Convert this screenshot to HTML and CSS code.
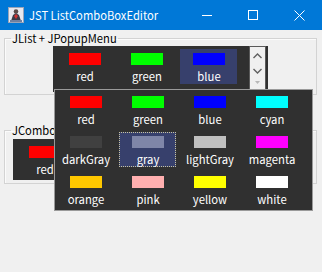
FILE: index.html
```html
<!DOCTYPE html>
<html>
<head>
<meta charset="utf-8">
<link rel="stylesheet" href="styles.css">
</head>
<body>
<div class="window">
  <div class="titlebar">
    <svg class="app-icon" viewBox="0 0 16 16" width="16" height="16">
      <rect x="0.5" y="0.5" width="15" height="15" fill="#e8e8ee" stroke="#9aa4b8"/>
      <path d="M3 14 L5 8 L8 6 L11 8 L13 14 Z" fill="#3a3a48"/>
      <circle cx="8" cy="4.5" r="2.3" fill="#5a4a48"/>
      <path d="M6 9 L8 7 L10 9 L8 12 Z" fill="#d03030"/>
      <rect x="2" y="13" width="12" height="2" fill="#7080a0"/>
    </svg>
    <div class="title">JST ListComboBoxEditor</div>
    <div class="ctrl">
      <svg width="10" height="10" viewBox="0 0 10 10"><path d="M0 5.5 H10" stroke="#fff" stroke-width="1"/></svg>
    </div>
    <div class="ctrl">
      <svg width="10" height="10" viewBox="0 0 10 10"><rect x="0.5" y="0.5" width="9" height="9" fill="none" stroke="#fff" stroke-width="1"/></svg>
    </div>
    <div class="ctrl">
      <svg width="11" height="11" viewBox="0 0 11 11"><path d="M0.5 0.5 L10.5 10.5 M10.5 0.5 L0.5 10.5" stroke="#fff" stroke-width="1"/></svg>
    </div>
  </div>

  <div class="content">
    <fieldset class="group group-list">
      <legend>JList + JPopupMenu</legend>
      <div class="listwrap">
        <div class="list">
          <div class="cell"><div class="item"><span class="swatch" style="background:#ff0000"></span><span class="label">red</span></div></div>
          <div class="cell"><div class="item"><span class="swatch" style="background:#00ff00"></span><span class="label">green</span></div></div>
          <div class="cell"><div class="item selected"><span class="swatch" style="background:#0000ff"></span><span class="label">blue</span></div></div>
        </div>
        <div class="scrollbar">
          <svg class="arrow" width="9" height="6" viewBox="0 0 9 6"><path d="M0.5 5 L4.5 1 L8.5 5" fill="none" stroke="#606060" stroke-width="1.4"/></svg>
          <svg class="arrow" width="9" height="6" viewBox="0 0 9 6"><path d="M0.5 1 L4.5 5 L8.5 1" fill="none" stroke="#606060" stroke-width="1.4"/></svg>
          <svg class="arrow small" width="5" height="3" viewBox="0 0 5 3"><path d="M0 0 L2.5 3 L5 0 Z" fill="#b8b8b8"/></svg>
        </div>
      </div>
    </fieldset>

    <fieldset class="group group-combo">
      <legend>JComboBox</legend>
      <div class="combo">
        <div class="cell"><div class="item"><span class="swatch" style="background:#ff0000"></span><span class="label">red</span></div></div>
      </div>
    </fieldset>
  </div>

  <div class="popup">
    <div class="cell"><div class="item"><span class="swatch" style="background:#ff0000"></span><span class="label">red</span></div></div>
    <div class="cell"><div class="item"><span class="swatch" style="background:#00ff00"></span><span class="label">green</span></div></div>
    <div class="cell"><div class="item"><span class="swatch" style="background:#0000ff"></span><span class="label">blue</span></div></div>
    <div class="cell"><div class="item"><span class="swatch" style="background:#00ffff"></span><span class="label">cyan</span></div></div>
    <div class="cell"><div class="item"><span class="swatch" style="background:#404040"></span><span class="label">darkGray</span></div></div>
    <div class="cell"><div class="item selected focus"><span class="swatch" style="background:#7f86a8"></span><span class="label">gray</span></div></div>
    <div class="cell"><div class="item"><span class="swatch" style="background:#c0c0c0"></span><span class="label">lightGray</span></div></div>
    <div class="cell"><div class="item"><span class="swatch" style="background:#ff00ff"></span><span class="label">magenta</span></div></div>
    <div class="cell"><div class="item"><span class="swatch" style="background:#ffc800"></span><span class="label">orange</span></div></div>
    <div class="cell"><div class="item"><span class="swatch" style="background:#ffafaf"></span><span class="label">pink</span></div></div>
    <div class="cell"><div class="item"><span class="swatch" style="background:#ffff00"></span><span class="label">yellow</span></div></div>
    <div class="cell"><div class="item"><span class="swatch" style="background:#ffffff"></span><span class="label">white</span></div></div>
  </div>
</div>
</body>
</html>
```

FILE: styles.css
```css
html, body {
  margin: 0;
  padding: 0;
}
body {
  width: 322px;
  height: 272px;
  overflow: hidden;
  background: #f0f0f0;
  font-family: "Noto Sans CJK JP", "Noto Sans", sans-serif;
  font-size: 11px;
}
.window {
  position: relative;
  width: 322px;
  height: 272px;
  background: #f0f0f0;
}
.titlebar {
  height: 30px;
  background: #0078d7;
  color: #fff;
  display: flex;
  align-items: center;
}
.app-icon {
  margin-left: 8px;
  margin-right: 5px;
  flex: none;
}
.title {
  flex: 1;
  font-size: 11.2px;
  line-height: 16px;
}
.ctrl {
  width: 46px;
  height: 30px;
  display: flex;
  align-items: center;
  justify-content: center;
}
.content {
  padding: 1px 5px 0 4px;
}
.group {
  margin: 0;
  border: 1px solid #d3d3d3;
  box-shadow: inset 1px 1px 0 #fbfbfb;
  min-width: 0;
  padding-left: 0;
  padding-right: 0;
}
.group legend {
  margin-left: 6px;
  padding: 0 1px;
  font-size: 11.2px;
  line-height: 14px;
  color: #000;
}
.group-list {
  padding-top: 1px;
  padding-bottom: 2px;
}
.group-combo {
  margin-top: 28px;
  padding-top: 2px;
  padding-bottom: 3px;
}
.listwrap {
  display: flex;
  width: 213px;
  height: 44px;
  margin-left: 48px;
  border: 1px solid #303030;
  background: #303030;
}
.list {
  width: 195px;
  display: flex;
  align-items: flex-start;
}
.scrollbar {
  width: 17px;
  background: #f0f0f0;
  border-left: 1px solid #5a5a5a;
  border-right: 1px solid #5a5a5a;
  border-top: 1px solid #5a5a5a;
  display: flex;
  flex-direction: column;
  align-items: center;
  padding-top: 6px;
  gap: 9px;
  box-sizing: border-box;
  height: 45px;
  margin-top: -1px;
}
.scrollbar .small {
  margin-top: -2px;
}
.cell {
  width: 62px;
  height: 40px;
  padding: 2px 3px 3px 2px;
  box-sizing: border-box;
  flex: none;
}
.item {
  width: 57px;
  height: 35px;
  display: flex;
  flex-direction: column;
  align-items: center;
  box-sizing: border-box;
  padding-top: 4px;
  color: #fff;
}
.item.selected {
  background: #37406c;
}
.item.focus {
  border: 1px dotted #c8c4a0;
  padding-top: 3px;
}
.swatch {
  display: block;
  width: 32px;
  height: 12px;
  margin-left: 1px;
}
.label {
  display: block;
  margin-top: 4px;
  margin-left: 1px;
  line-height: 14px;
  font-size: 11.3px;
  white-space: nowrap;
}
.combo {
  width: 293px;
  height: 39px;
  margin-left: 8px;
  border: 1px solid #303030;
  background: #303030;
}
.combo .cell {
  height: 39px;
}
.popup {
  position: absolute;
  left: 54px;
  top: 89px;
  width: 257px;
  height: 120px;
  border: 1px solid #9a9a9a;
  background: #303030;
  display: grid;
  grid-template-columns: repeat(4, 62px);
  grid-auto-rows: 40px;
}
```
